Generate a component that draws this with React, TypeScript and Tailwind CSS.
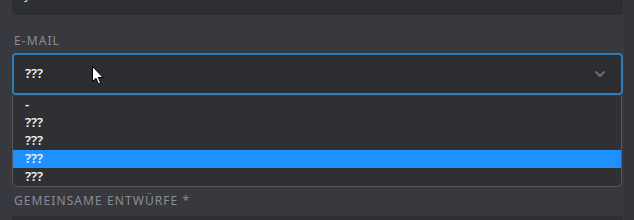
import React from "react";

export default function App() {
  const items = ["-", "???", "???", "???", "???"];
  return (
    <div className="relative w-[634px] h-[220px] overflow-hidden bg-[#38393e] flex" style={{ fontFamily: '"Noto Sans", "Open Sans", sans-serif' }}>
      <div className="flex-1 pl-3 pr-[1px] flex flex-col">
        <div className="shrink-0 h-[15px] bg-[#2e2f33] rounded-b-[4px] relative overflow-hidden">
          <span className="absolute left-[13px] top-[-13px] text-[13px] leading-[14px] text-[#d8dde4]">j</span>
        </div>
        <div className="shrink-0 mt-[18px] text-[12px] leading-[16px] tracking-[0.09em] text-[#8b8d93] pl-[2px]">E-MAIL</div>
        <div className="shrink-0 mt-[4px] h-[42px] border-2 border-[#2f7ab8] rounded-[4px] bg-[#2c2d31] flex items-center justify-between pl-[11px] pr-[15px]">
          <span className="text-[13px] font-semibold text-[#f0f1f3]">???</span>
          <svg width="12" height="8" viewBox="0 0 12 8" fill="none">
            <path d="M1.5 1.5 L6 6 L10.5 1.5" stroke="#6a6c72" strokeWidth="2" />
          </svg>
        </div>
        <div className="shrink-0 mt-[1px] border border-t-0 border-[#55575c] rounded-b-[5px] bg-[#2f3034] mr-[1px] flex flex-col">
          {items.map((t, i) => (
            <div key={i} className={`h-[18px] flex items-center pl-[12px] text-[13px] font-semibold text-[#f0f1f3] ${i === 3 ? "bg-[#1e90ff]" : ""}`}>
              {t}
            </div>
          ))}
        </div>
        <div className="shrink-0 mt-[6px] text-[12px] leading-[16px] tracking-[0.09em] text-[#8b8d93] pl-[2px]">GEMEINSAME ENTWÜRFE *</div>
        <div className="shrink-0 mt-[7px] h-[20px] bg-[#2e2f33] rounded-t-[4px]" />
      </div>
      <div className="w-[10px] bg-[#323337]" />
      <svg className="absolute left-[92px] top-[66px]" width="12" height="19" viewBox="0 0 12 19">
        <path d="M0.5 0.5 L0.5 15.5 L4 12.3 L6.3 17.8 L8.6 16.8 L6.3 11.5 L11 11.5 Z" fill="#fff" stroke="#000" strokeWidth="1" />
      </svg>
    </div>
  );
}
